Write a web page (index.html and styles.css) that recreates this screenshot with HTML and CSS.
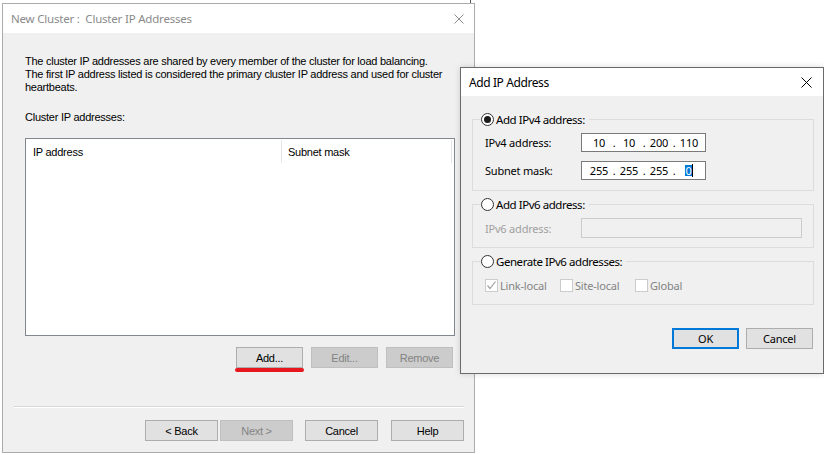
FILE: index.html
```html
<!DOCTYPE html>
<html lang="en">
<head>
  <meta charset="UTF-8">
  <title>New Cluster : Cluster IP Addresses</title>
  <link rel="stylesheet" href="styles.css">
</head>
<body>
  <div class="bg-edge"></div>

  <!-- wizard page -->
  <div class="window wizard">
    <div class="titlebar">
      <span class="title">New Cluster :&nbsp; Cluster IP Addresses</span>
      <svg class="close" width="10" height="10" viewBox="0 0 10 10"><path d="M0.5 0.5 L9.5 9.5 M9.5 0.5 L0.5 9.5" stroke="#8c8c8c" stroke-width="1" fill="none"/></svg>
    </div>
    <div class="wizard-body">
      <p class="intro">The cluster IP addresses are shared by every member of the cluster for load balancing.<br>The first IP address listed is considered the primary cluster IP address and used for cluster<br>heartbeats.</p>
      <p class="list-label">Cluster IP addresses:</p>
      <div class="listview">
        <div class="list-header">
          <div class="col col-ip">IP address</div>
          <div class="col col-mask">Subnet mask</div>
        </div>
      </div>
      <div class="list-actions">
        <div class="marked">
          <button class="btn">Add...</button>
          <span class="underline"></span>
        </div>
        <button class="btn" disabled>Edit...</button>
        <button class="btn" disabled>Remove</button>
      </div>
    </div>
    <div class="wizard-footer">
      <div class="separator"></div>
      <div class="wizard-nav">
        <button class="btn btn-wide">&lt; Back</button>
        <button class="btn btn-wide" disabled>Next &gt;</button>
        <button class="btn btn-wide nav-cancel">Cancel</button>
        <button class="btn btn-wide nav-help">Help</button>
      </div>
    </div>
  </div>

  <!-- Add IP Address dialog -->
  <div class="window dialog">
    <div class="titlebar">
      <span class="title">Add IP Address</span>
      <svg class="close" width="11" height="11" viewBox="0 0 11 11"><path d="M0.5 0.5 L10.5 10.5 M10.5 0.5 L0.5 10.5" stroke="#000" stroke-width="1" fill="none"/></svg>
    </div>
    <div class="dialog-body">
      <div class="group group-v4">
        <div class="group-title"><span class="radio checked"></span>Add IPv4 address:</div>
        <div class="field-row">
          <span class="field-label">IPv4 address:</span>
          <div class="ipbox">
            <span class="seg">10</span><span class="dot">.</span>
            <span class="seg">10</span><span class="dot">.</span>
            <span class="seg">200</span><span class="dot">.</span>
            <span class="seg">110</span>
          </div>
        </div>
        <div class="field-row">
          <span class="field-label">Subnet mask:</span>
          <div class="ipbox">
            <span class="seg">255</span><span class="dot">.</span>
            <span class="seg">255</span><span class="dot">.</span>
            <span class="seg">255</span><span class="dot">.</span>
            <span class="seg"><span class="selected">0</span><span class="caret"></span></span>
          </div>
        </div>
      </div>

      <div class="group group-v6">
        <div class="group-title"><span class="radio"></span>Add IPv6 address:</div>
        <div class="field-row">
          <span class="field-label disabled">IPv6 address:</span>
          <div class="textbox disabled-box"></div>
        </div>
      </div>

      <div class="group group-gen">
        <div class="group-title"><span class="radio"></span>Generate IPv6 addresses:</div>
        <div class="check-row">
          <label class="check"><span class="box">
            <svg width="11" height="11" viewBox="0 0 11 11"><path d="M1.5 5.5 L4 8.5 L9.5 1.5" stroke="#a0a0a0" stroke-width="1.2" fill="none"/></svg>
          </span>Link-local</label>
          <label class="check"><span class="box"></span>Site-local</label>
          <label class="check"><span class="box"></span>Global</label>
        </div>
      </div>

      <div class="dialog-actions">
        <button class="btn btn-default">OK</button>
        <button class="btn">Cancel</button>
      </div>
    </div>
  </div>
</body>
</html>
```

FILE: styles.css
```css
body {
  margin: 0;
  width: 824px;
  height: 455px;
  position: relative;
  overflow: hidden;
  background: #fff;
  font-family: "Liberation Sans", Arial, sans-serif;
  font-size: 11px;
  color: #000;
}
p {
  margin: 0;
}
.bg-edge {
  position: absolute;
  left: 470px;
  top: 0;
  width: 1px;
  height: 3px;
  background: #555;
}
.window {
  position: absolute;
  box-sizing: border-box;
  display: flex;
  flex-direction: column;
  background: #f0f0f0;
}
.titlebar {
  display: flex;
  align-items: center;
  justify-content: space-between;
  background: #fff;
  flex-shrink: 0;
}
.title {
  font-family: "Noto Sans", "Open Sans", sans-serif;
  font-size: 11.5px;
  letter-spacing: -0.2px;
}
.btn {
  box-sizing: border-box;
  width: 67px;
  height: 21px;
  padding: 0;
  background: #e1e1e1;
  border: 1px solid #adadad;
  font-family: inherit;
  font-size: inherit;
  letter-spacing: inherit;
  color: #000;
}
.btn:disabled {
  background: #cccccc;
  border-color: #bfbfbf;
  color: #838383;
}

/* wizard page */
.wizard {
  left: 2px;
  top: 3px;
  width: 473px;
  height: 450px;
  border: 1px solid #ababab;
  letter-spacing: -0.25px;
}
.wizard .titlebar {
  height: 29px;
  padding: 0 10px 0 8px;
}
.wizard .title {
  color: #8a8a8a;
}
.wizard-body {
  padding: 22px 19px 0 22px;
}
.intro {
  line-height: 13px;
}
.list-label {
  margin-top: 17px;
  line-height: 13px;
}
.listview {
  box-sizing: border-box;
  height: 198px;
  margin-top: 14px;
  background: #fff;
  border: 1px solid #828790;
}
.list-header {
  display: flex;
  height: 25px;
}
.col {
  display: flex;
  align-items: center;
  border-right: 1px solid #e5e5e5;
  margin: 1px 0 1px;
}
.col-ip {
  width: 248px;
  padding-left: 7px;
}
.col-mask {
  width: 163px;
  padding-left: 6px;
}
.list-actions {
  display: flex;
  justify-content: flex-end;
  gap: 8px;
  margin: 11px 2px 0 0;
}
.marked {
  position: relative;
  display: flex;
}
.underline {
  position: absolute;
  left: -1px;
  top: 21px;
  width: 69px;
  height: 4px;
  border-radius: 2px;
  background: #e8161d;
}
.wizard-footer {
  padding: 0 10px 0 11px;
}
.separator {
  margin-top: 38px;
  border-top: 1px solid #d6d6d6;
  border-bottom: 1px solid #fff;
}
.wizard-nav {
  display: flex;
  justify-content: flex-end;
  margin-top: 12px;
}
.btn-wide {
  width: 73px;
}
.btn-wide + .btn-wide {
  margin-left: 2px;
}
.nav-cancel {
  margin-left: 12px !important;
}
.nav-help {
  margin-left: 13px !important;
}

/* add ip dialog */
.dialog {
  left: 460px;
  top: 67px;
  width: 364px;
  height: 307px;
  border: 1px solid #6a6a6a;
  box-shadow: 0 0 6px rgba(0, 0, 0, 0.15);
  font-family: "Noto Sans", "Open Sans", sans-serif;
  font-size: 11px;
  letter-spacing: -0.2px;
}
.dialog .title {
  font-size: 12px;
  letter-spacing: -0.4px;
}
.dialog .titlebar {
  height: 28px;
  padding: 0 11px 0 8px;
}
.dialog-body {
  padding: 23px 9px 0 11px;
}
.group {
  border: 1px solid #dcdcdc;
}
.group + .group {
  margin-top: 13px;
}
.group-title {
  display: flex;
  align-items: center;
  gap: 2px;
  width: max-content;
  height: 16px;
  margin: -9px 0 0 8px;
  padding-right: 4px;
  background: #f0f0f0;
  font-size: 11.5px;
  letter-spacing: -0.45px;
}
.radio {
  box-sizing: border-box;
  width: 13px;
  height: 13px;
  border: 1px solid #333;
  border-radius: 50%;
  background: #fff;
  position: relative;
}
.radio.checked::after {
  content: "";
  position: absolute;
  left: 2px;
  top: 2px;
  width: 7px;
  height: 7px;
  border-radius: 50%;
  background: #1a1a1a;
}
.field-row {
  display: flex;
  align-items: center;
  margin-top: 6px;
  padding-left: 12px;
}
.field-row + .field-row {
  margin-top: 9px;
}
.field-label {
  flex: none;
  width: 96px;
}
.disabled {
  color: #a0a0a0;
}
.ipbox {
  flex: none;
  box-sizing: border-box;
  display: flex;
  width: 125px;
  height: 19px;
  padding-left: 5px;
  border: 1px solid #7a7a7a;
  background: #fff;
  align-items: center;
}
.seg {
  width: 24px;
  display: flex;
  justify-content: center;
  align-items: center;
}
.dot {
  width: 6px;
  text-align: center;
}
.selected {
  background: #0078d7;
  color: #fff;
  line-height: 11px;
  padding: 0 0.5px;
}
.caret {
  width: 1px;
  height: 13px;
  background: #000;
}
.textbox {
  flex: none;
  box-sizing: border-box;
  width: 221px;
  height: 20px;
}
.disabled-box {
  border: 1px solid #cccccc;
  background: #f0f0f0;
}
.group-v4 {
  padding-bottom: 10px;
}
.group-v6 {
  padding-bottom: 9px;
}
.group-gen {
  padding-bottom: 11px;
}
.check-row {
  display: flex;
  align-items: center;
  margin-top: 9px;
  padding-left: 12px;
  color: #838383;
}
.check {
  display: flex;
  align-items: center;
  gap: 2px;
  width: 75px;
}
.box {
  box-sizing: border-box;
  width: 13px;
  height: 13px;
  border: 1px solid #cccccc;
  background: #fff;
  display: flex;
  align-items: center;
  justify-content: center;
}
.dialog-actions {
  display: flex;
  justify-content: flex-end;
  gap: 7px;
  margin: 23px 1px 0 0;
}
.btn-default {
  border: 2px solid #0078d7;
}
```
